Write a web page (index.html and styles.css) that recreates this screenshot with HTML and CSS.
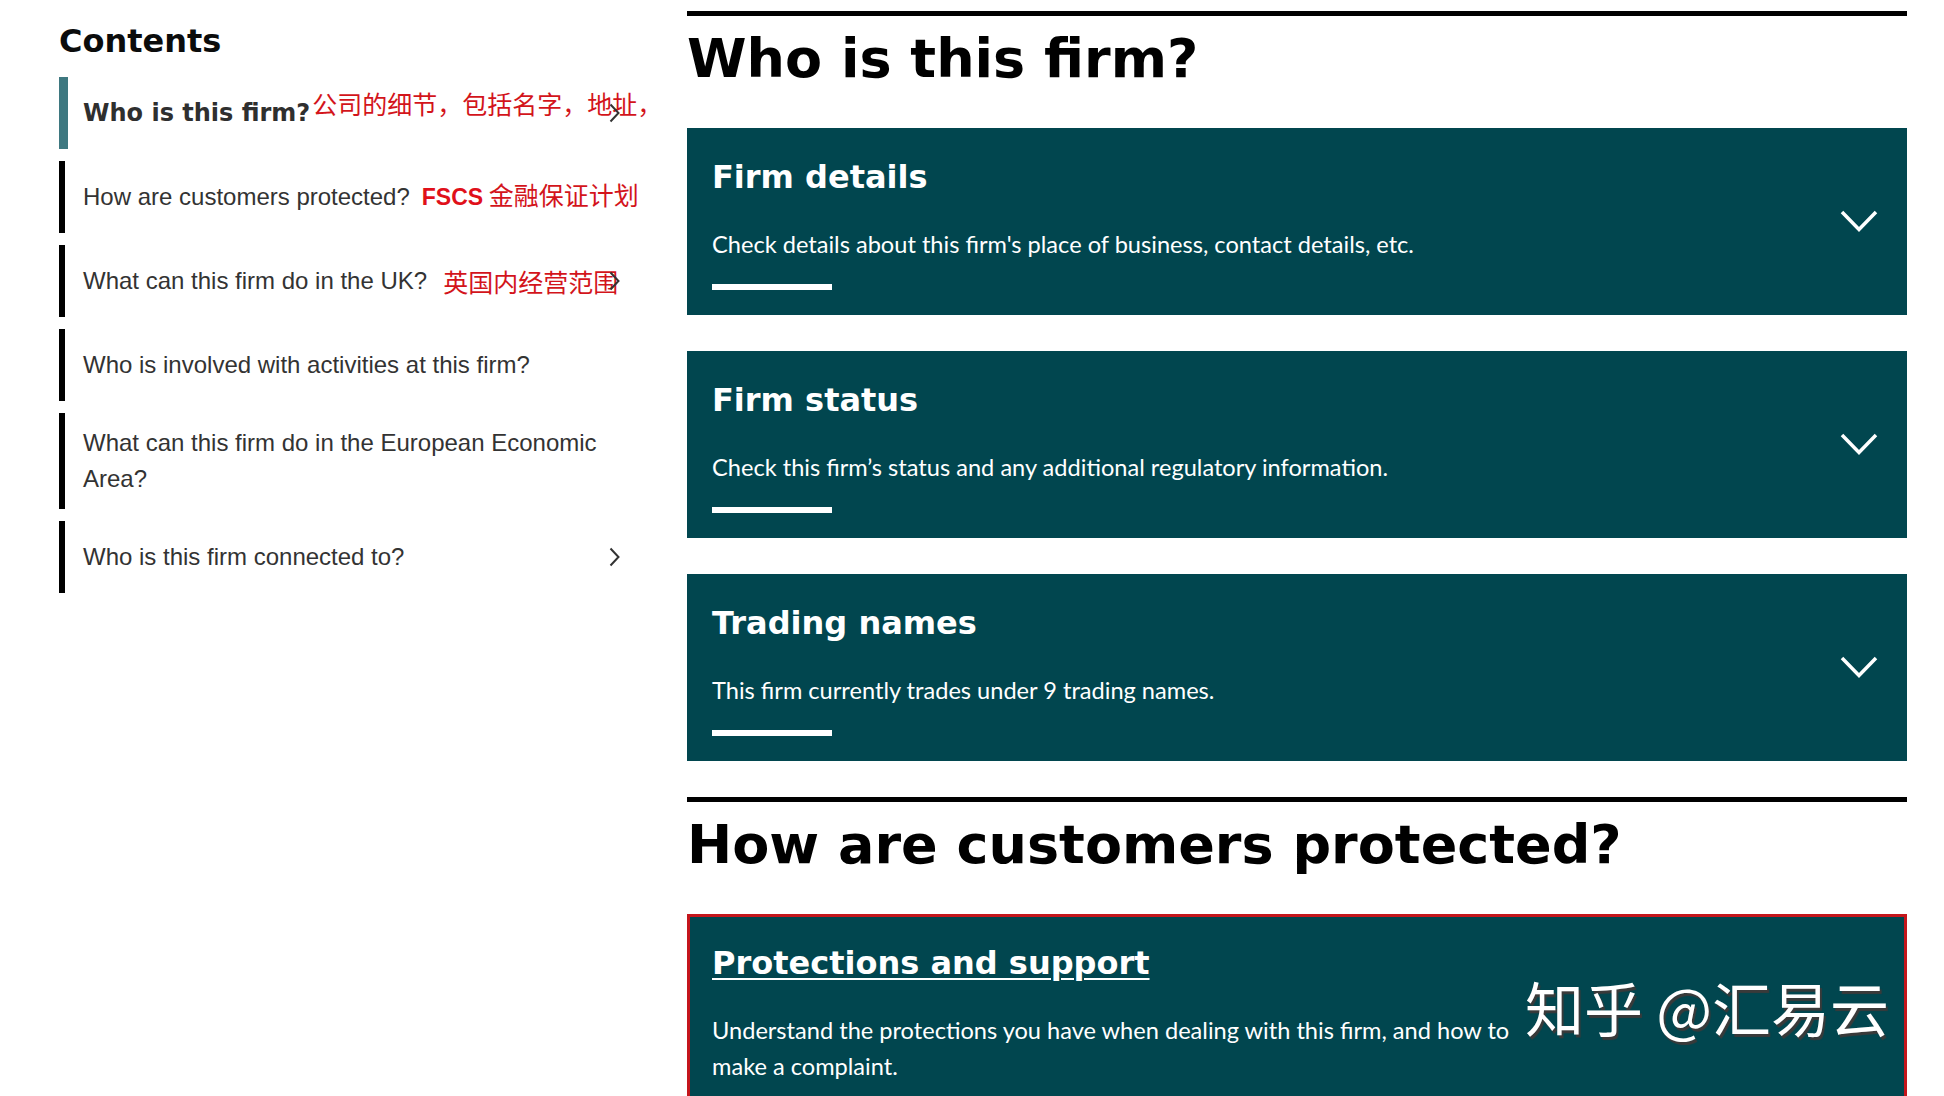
FILE: index.html
```html
<!DOCTYPE html>
<html lang="en">
<head>
<meta charset="utf-8">
<title>Firm details</title>
<link rel="stylesheet" href="styles.css">
</head>
<body>
<div class="page">
  <aside class="sidebar">
    <h2 class="contents-title">Contents</h2>
    <nav class="toc">
      <a class="toc-item toc-item--active" href="#who">
        <span class="toc-label toc-label--nowrap">Who is this firm?<span class="note note--raised">公司的细节，包括名字，地址，</span></span>
        <svg class="toc-chevron" viewBox="0 0 11 20"><polyline points="1.5,1.5 9.5,10 1.5,18.5"/></svg>
      </a>
      <a class="toc-item" href="#protected">
        <span class="toc-label toc-label--nowrap">How are customers protected?<span class="note note--fscs"><b class="note-strong">FSCS</b> 金融保证计划</span></span>
      </a>
      <a class="toc-item" href="#uk">
        <span class="toc-label toc-label--nowrap">What can this firm do in the UK?<span class="note note--lowered">英国内经营范围</span></span>
        <svg class="toc-chevron" viewBox="0 0 11 20"><polyline points="1.5,1.5 9.5,10 1.5,18.5"/></svg>
      </a>
      <a class="toc-item" href="#involved">
        <span class="toc-label">Who is involved with activities at this firm?</span>
      </a>
      <a class="toc-item" href="#eea">
        <span class="toc-label">What can this firm do in the European Economic Area?</span>
      </a>
      <a class="toc-item" href="#connected">
        <span class="toc-label">Who is this firm connected to?</span>
        <svg class="toc-chevron" viewBox="0 0 11 20"><polyline points="1.5,1.5 9.5,10 1.5,18.5"/></svg>
      </a>
    </nav>
  </aside>

  <main class="content">
    <section class="section section--first" id="who">
      <h1 class="section-title">Who is this firm?</h1>

      <div class="card">
        <div class="card-body">
          <h3 class="card-title">Firm details</h3>
          <p class="card-text">Check details about this firm's place of business, contact details, etc.</p>
          <div class="card-bar"></div>
        </div>
        <svg class="card-chevron" viewBox="0 0 38 22"><polyline points="2,2 19,19.5 36,2"/></svg>
      </div>

      <div class="card">
        <div class="card-body">
          <h3 class="card-title">Firm status</h3>
          <p class="card-text">Check this firm’s status and any additional regulatory information.</p>
          <div class="card-bar"></div>
        </div>
        <svg class="card-chevron" viewBox="0 0 38 22"><polyline points="2,2 19,19.5 36,2"/></svg>
      </div>

      <div class="card">
        <div class="card-body">
          <h3 class="card-title">Trading names</h3>
          <p class="card-text">This firm currently trades under 9 trading names.</p>
          <div class="card-bar"></div>
        </div>
        <svg class="card-chevron" viewBox="0 0 38 22"><polyline points="2,2 19,19.5 36,2"/></svg>
      </div>
    </section>

    <section class="section" id="protected-section">
      <h1 class="section-title">How are customers protected?</h1>

      <div class="card card--link">
        <div class="card-body">
          <h3 class="card-title"><a class="card-link" href="#protections">Protections and support</a></h3>
          <p class="card-text">Understand the protections you have when dealing with this firm, and how to make a complaint.</p>
        </div>
        <div class="watermark">知乎 @汇易云</div>
      </div>
    </section>
  </main>
</div>
</body>
</html>
```

FILE: styles.css
```css
html, body {
  margin: 0;
  padding: 0;
  background: #ffffff;
}

body {
  font-family: "Liberation Sans", Arial, sans-serif;
  color: #333333;
}

.page {
  display: flex;
  align-items: flex-start;
}

/* ---------- Sidebar ---------- */
.sidebar {
  flex: 0 0 640px;
  width: 640px;
  min-width: 0;
  box-sizing: border-box;
  padding: 22px 0 0 59px;
}

.contents-title {
  margin: 0 0 17px;
  font-family: "DejaVu Sans", Verdana, sans-serif;
  font-weight: bold;
  font-size: 32px;
  line-height: 38px;
  color: #0b0c0c;
}

.toc {
  display: flex;
  flex-direction: column;
  gap: 12px;
}

.toc-item {
  display: flex;
  align-items: center;
  gap: 10px;
  box-sizing: border-box;
  min-width: 0;
  min-height: 72px;
  padding: 12px 20px 12px 18px;
  border-left: 6px solid #000000;
  color: #333333;
  font-size: 24px;
  line-height: 36px;
  text-decoration: none;
}

.toc-item--active {
  border-left: 9px solid #3e7880;
  padding-left: 15px;
  font-family: "DejaVu Sans", Verdana, sans-serif;
  font-weight: bold;
  color: #2f2f2f;
}

.toc-label {
  flex: 1 1 0;
  min-width: 0;
}

.toc-label--nowrap {
  white-space: nowrap;
}

.toc-chevron {
  flex: 0 0 11px;
  width: 11px;
  height: 20px;
  fill: none;
  stroke: #333333;
  stroke-width: 2;
}

/* red annotations */
.note {
  font-family: "Noto Sans CJK SC", sans-serif;
  font-weight: normal;
  font-size: 25px;
  line-height: 0;
  color: #d3141b;
}

.note--raised {
  margin-left: 2px;
  vertical-align: 7px;
}

.note--fscs {
  margin-left: 12px;
}

.note--lowered {
  margin-left: 16px;
  vertical-align: -3px;
}

.note-strong {
  font-family: "Liberation Sans", Arial, sans-serif;
  font-weight: bold;
  font-size: 23px;
  color: #e0101a;
}

/* ---------- Main content ---------- */
.content {
  flex: 0 0 1220px;
  width: 1220px;
  min-width: 0;
  margin-left: 47px;
}

.section {
  border-top: 5px solid #000000;
  margin-top: 36px;
}

.section--first {
  margin-top: 11px;
}

.section-title {
  margin: 11px 0 37px;
  font-family: "DejaVu Sans", Verdana, sans-serif;
  font-weight: bold;
  font-size: 54px;
  line-height: 64px;
  color: #000000;
}

.card {
  display: flex;
  align-items: center;
  box-sizing: border-box;
  background: #01464f;
  color: #ffffff;
  padding: 30px 29px 25px 25px;
  margin-bottom: 36px;
}

.card:last-child {
  margin-bottom: 0;
}

.card-body {
  flex: 1 1 auto;
  min-width: 0;
}

.card-title {
  margin: 0;
  font-family: "DejaVu Sans", Verdana, sans-serif;
  font-weight: bold;
  font-size: 32px;
  line-height: 38px;
  color: #ffffff;
}

.card-text {
  margin: 30px 0 0;
  max-width: 830px;
  font-family: Lato, "Liberation Sans", sans-serif;
  font-size: 23.6px;
  line-height: 36px;
  color: #ffffff;
}

.card-bar {
  width: 120px;
  height: 6px;
  margin-top: 22px;
  background: #ffffff;
}

.card-chevron {
  flex: 0 0 38px;
  width: 38px;
  height: 22px;
  margin-bottom: 6px;
  fill: none;
  stroke: #ffffff;
  stroke-width: 3.5;
}

.card--link {
  position: relative;
  align-items: flex-start;
  border: 3px solid #c4161c;
  padding: 27px 26px 60px 22px;
}

.card-link {
  color: #ffffff;
  text-decoration: underline;
  text-decoration-thickness: 2px;
  text-underline-offset: 4px;
}

.watermark {
  position: absolute;
  right: 15px;
  top: 60px;
  font-family: "Noto Sans CJK SC", sans-serif;
  font-size: 59px;
  line-height: 59px;
  color: #ffffff;
  white-space: nowrap;
  text-shadow: 2px 3px 1px #3a3a3a;
}
```
